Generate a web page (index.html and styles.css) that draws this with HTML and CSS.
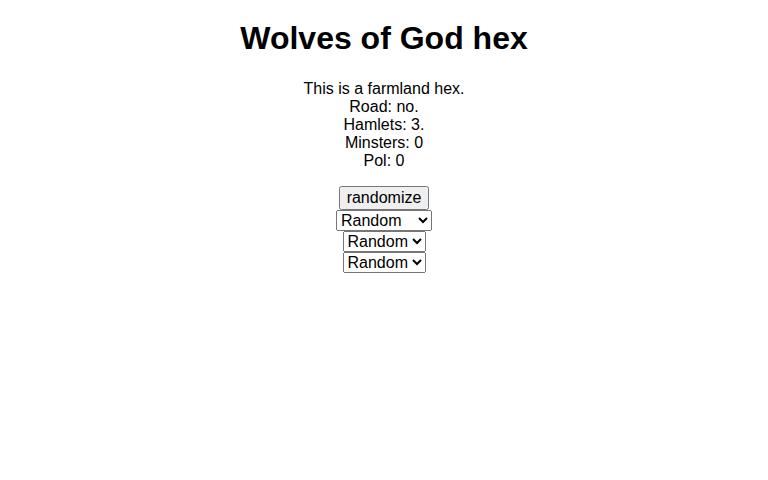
FILE: index.html
```html
<!DOCTYPE html>
<html>
<head>
<meta charset="utf-8">
<link rel="stylesheet" href="styles.css">
</head>
<body>
<main class="page">
<h1 class="title">Wolves of God hex</h1>
<p class="desc">This is a farmland hex.<br>Road: no.<br>Hamlets: 3.<br>Minsters: 0<br>Pol: 0</p>
<form class="controls">
<button type="button" class="btn">randomize</button><br>
<select class="sel wide"><option>Random</option><option>Farmland&nbsp;</option></select><br>
<select class="sel"><option>Random</option></select><br>
<select class="sel"><option>Random</option></select>
</form>
</main>
</body>
</html>
```
FILE: styles.css
```css
body {
  margin: 8px;
  font-family: "Liberation Sans", Arial, sans-serif;
  font-size: 16px;
  color: #000;
  background: #fff;
}
.page {
  text-align: center;
}
.title {
  font-size: 32px;
  font-weight: bold;
  margin: 12px 0 23px;
}
.desc {
  margin: 16px 0;
}
.controls {
  margin: 0;
}
.btn, .sel {
  font: inherit;
}
.sel.wide {
  width: 96px;
}
```
